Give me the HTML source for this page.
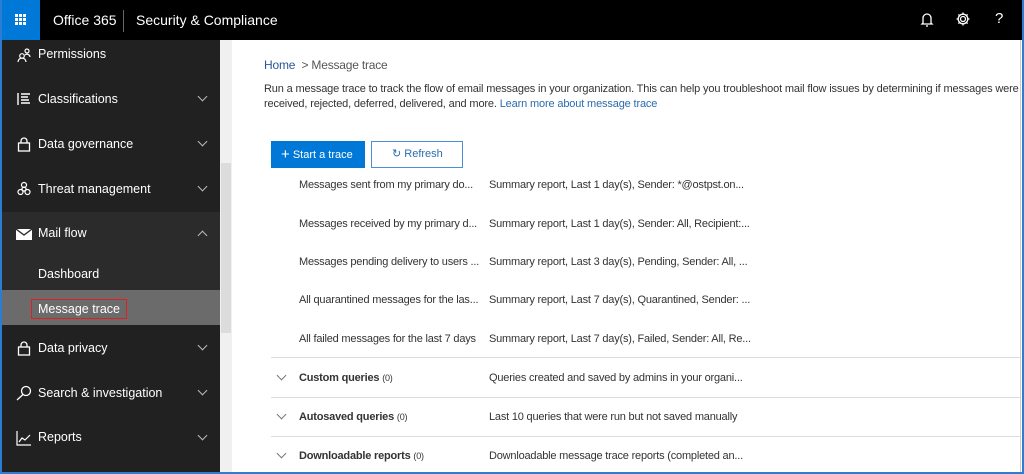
<!DOCTYPE html>
<html><head><style>
*{margin:0;padding:0;box-sizing:border-box}
body{width:1024px;height:474px;overflow:hidden;font-family:"Liberation Sans",sans-serif;background:#fff;position:relative}
.frame{position:absolute;inset:0;border:2px solid #2b7cd3;border-top:none;z-index:10;pointer-events:none}
.top{position:absolute;left:0;top:0;width:1024px;height:40px;background:#000;color:#fff}
.waf{position:absolute;left:0;top:0;width:40px;height:40px;background:#0078d7}
.t{position:absolute;top:12px;font-size:14px}
.side{position:absolute;left:0;top:40px;width:220px;height:434px;background:#212121;color:#fff;font-size:12.5px}
.it{position:absolute;left:38px}
.ic{position:absolute;left:16px;width:16px;height:16px}
.chev{position:absolute;left:199px;width:7px;height:7px;border-right:1.2px solid #bbb;border-bottom:1.2px solid #bbb;transform:rotate(45deg)}
.sb{position:absolute;left:220px;top:40px;width:12px;height:434px;background:#f0f0f0}
.c{position:absolute;color:#333;font-size:11px;letter-spacing:-0.2px}
.hl{position:absolute;left:271px;width:749px;height:1px;background:#ddd}
.r1{left:299px}.r2{left:489px}
.ch2{position:absolute;left:278px;width:7px;height:7px;border-right:1px solid #777;border-bottom:1px solid #777;transform:rotate(45deg)}
</style></head><body>
<div class="top">
<div class="waf"><svg width="40" height="40"><g fill="#fff"><rect x="15" y="14" width="3" height="3"/><rect x="19" y="14" width="3" height="3"/><rect x="23" y="14" width="3" height="3"/><rect x="15" y="18" width="3" height="3"/><rect x="19" y="18" width="3" height="3"/><rect x="23" y="18" width="3" height="3"/><rect x="15" y="22" width="3" height="3"/><rect x="19" y="22" width="3" height="3"/><rect x="23" y="22" width="3" height="3"/></g></svg></div>
<span class="t" style="left:53px">Office 365</span>
<div style="position:absolute;left:123px;top:10px;width:1px;height:22px;background:#666"></div>
<span class="t" style="left:136px">Security &amp; Compliance</span>
<svg style="position:absolute;left:920px;top:12px" width="14" height="16" fill="none" stroke="#fff" stroke-width="1.3"><path d="M3 11V6a4 4 0 0 1 8 0v5l1 1H2z"/><path d="M6 14h2"/></svg>
<svg style="position:absolute;left:955px;top:11px" width="16" height="16" fill="none" stroke="#fff" stroke-width="1.3"><circle cx="8" cy="8" r="2.5"/><path d="M8 1.5v2M8 12.5v2M1.5 8h2M12.5 8h2M3.4 3.4l1.4 1.4M11.2 11.2l1.4 1.4M3.4 12.6l1.4-1.4M11.2 4.8l1.4-1.4"/><circle cx="8" cy="8" r="4.8"/></svg>
<span class="t" style="left:995px;font-size:15px;top:10px">?</span>
</div>
<div class="side">
<div style="position:absolute;top:172px;left:0;width:220px;height:78px;background:#2b2b2b"></div>
<div style="position:absolute;top:250px;left:0;width:220px;height:35px;background:#6b6b6b"></div>
<svg class="ic" style="top:7px" viewBox="0 0 16 16" fill="none" stroke="#fff" stroke-width="1.2"><circle cx="6" cy="9" r="2.3"/><path d="M2 15a4 4 0 0 1 8 0"/><circle cx="11" cy="4" r="2"/><path d="M9 8a3 3 0 0 1 5 2"/></svg><span class="it" style="top:7px">Permissions</span>
<svg class="ic" style="top:51px" viewBox="0 0 16 16" stroke="#fff" stroke-width="1.4"><path d="M2 2v12M5 3h9M5 6h7M5 9h8M5 12h9"/></svg><span class="it" style="top:52px">Classifications</span><div class="chev" style="top:53px"></div>
<svg class="ic" style="top:96px" viewBox="0 0 16 16" fill="none" stroke="#fff" stroke-width="1.3"><rect x="2.5" y="7" width="11" height="8"/><path d="M5 7V5a3 3 0 0 1 6 0v2"/></svg><span class="it" style="top:97px">Data governance</span><div class="chev" style="top:98px"></div>
<svg class="ic" style="top:141px" viewBox="0 0 16 16" fill="none" stroke="#fff" stroke-width="1.2"><circle cx="8" cy="8" r="2"/><circle cx="8" cy="4" r="2.5"/><circle cx="4.5" cy="11" r="2.5"/><circle cx="11.5" cy="11" r="2.5"/></svg><span class="it" style="top:142px">Threat management</span><div class="chev" style="top:143px"></div>
<svg class="ic" style="top:186px" viewBox="0 0 16 16"><rect x="0" y="3" width="16" height="11" fill="#fff"/><path d="M0 3l8 6 8-6" fill="none" stroke="#2b2b2b" stroke-width="1.3"/></svg><span class="it" style="top:186px">Mail flow</span><div class="chev" style="top:192px;transform:rotate(-135deg)"></div>
<span class="it" style="top:227px">Dashboard</span>
<span class="it" style="top:259px;left:31px;border:1.5px solid #e02020;padding:2px 6px 2px 6px">Message trace</span>
<svg class="ic" style="top:300px" viewBox="0 0 16 16" fill="none" stroke="#fff" stroke-width="1.3"><rect x="2.5" y="7" width="11" height="8"/><path d="M5 7V5a3 3 0 0 1 6 0v2"/></svg><span class="it" style="top:301px">Data privacy</span><div class="chev" style="top:302px"></div>
<svg class="ic" style="top:345px" viewBox="0 0 16 16" fill="none" stroke="#fff" stroke-width="1.3"><circle cx="10" cy="6" r="4.5"/><path d="M7 9.5L1 15"/></svg><span class="it" style="top:346px">Search &amp; investigation</span><div class="chev" style="top:347px"></div>
<svg class="ic" style="top:390px" viewBox="0 0 16 16" fill="none" stroke="#fff" stroke-width="1.2"><path d="M1 1v14h14M3 12l3-4 3 2 5-5"/></svg><span class="it" style="top:390px">Reports</span><div class="chev" style="top:392px"></div>
</div>
<div class="sb"><div style="position:absolute;left:1px;top:123px;width:10px;height:170px;background:#dcdcdc"></div></div>
<span class="c" style="left:264px;top:58px;font-size:12px;color:#555"><span style="color:#2b5797">Home</span> &nbsp;&gt; Message trace</span>
<div class="c" style="left:264px;top:82px;line-height:15px;white-space:nowrap;width:756px;overflow:hidden;letter-spacing:-0.15px">Run a message trace to track the flow of email messages in your organization. This can help you troubleshoot mail flow issues by determining if messages were<br>received, rejected, deferred, delivered, and more. <span style="color:#2b6cb0">Learn more about message trace</span></div>
<div style="position:absolute;left:271px;top:141px;width:94px;height:27px;background:#0078d7;color:#fff;font-size:11px;line-height:27px;padding-left:10px"><span style="font-size:15px;vertical-align:-1px">+</span> Start a trace</div>
<div style="position:absolute;left:371px;top:141px;width:92px;height:27px;border:1px solid #4a90d9;color:#2b6cb0;font-size:11px;line-height:25px;padding-left:20px">↻ Refresh</div>
<span class="c r1" style="top:179px">Messages sent from my primary do...</span><span class="c r2" style="top:179px">Summary report, Last 1 day(s), Sender: *@ostpst.on...</span>
<span class="c r1" style="top:218px">Messages received by my primary d...</span><span class="c r2" style="top:218px">Summary report, Last 1 day(s), Sender: All, Recipient:...</span>
<span class="c r1" style="top:256px">Messages pending delivery to users ...</span><span class="c r2" style="top:256px">Summary report, Last 3 day(s), Pending, Sender: All, ...</span>
<span class="c r1" style="top:294px">All quarantined messages for the las...</span><span class="c r2" style="top:294px">Summary report, Last 7 day(s), Quarantined, Sender: ...</span>
<span class="c r1" style="top:333px">All failed messages for the last 7 days</span><span class="c r2" style="top:333px">Summary report, Last 7 day(s), Failed, Sender: All, Re...</span>
<div class="hl" style="top:357px"></div><div class="hl" style="top:397px"></div><div class="hl" style="top:436px"></div>
<div style="position:absolute;left:1020px;top:40px;width:1px;height:434px;background:#ccc"></div>
<div class="ch2" style="top:372px"></div><span class="c r1" style="top:372px"><b>Custom queries</b> <span style="font-size:9px">(0)</span></span><span class="c r2" style="top:372px">Queries created and saved by admins in your organi...</span>
<div class="ch2" style="top:411px"></div><span class="c r1" style="top:411px"><b>Autosaved queries</b> <span style="font-size:9px">(0)</span></span><span class="c r2" style="top:411px">Last 10 queries that were run but not saved manually</span>
<div class="ch2" style="top:450px"></div><span class="c r1" style="top:450px"><b>Downloadable reports</b> <span style="font-size:9px">(0)</span></span><span class="c r2" style="top:450px">Downloadable message trace reports (completed an...</span>
<div class="frame"></div>
</body></html>
